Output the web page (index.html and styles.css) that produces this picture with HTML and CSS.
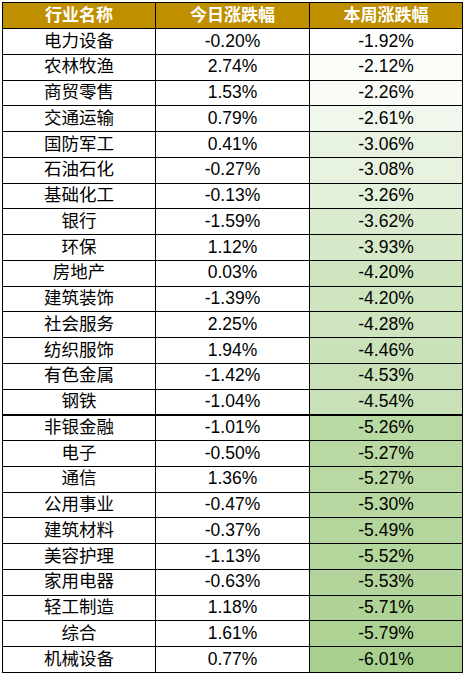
FILE: index.html
```html
<!DOCTYPE html>
<html lang="zh">
<head>
<meta charset="utf-8">
<title>行业涨跌幅</title>
<link rel="stylesheet" href="styles.css">
</head>
<body>
<div class="sheet">
  <div class="cell head">行业名称</div><div class="cell head">今日涨跌幅</div><div class="cell head">本周涨跌幅</div>
  <div class="cell">电力设备</div><div class="cell">-0.20%</div><div class="cell" style="background:rgb(255,255,255)">-1.92%</div>
  <div class="cell">农林牧渔</div><div class="cell">2.74%</div><div class="cell" style="background:rgb(251,253,249)">-2.12%</div>
  <div class="cell">商贸零售</div><div class="cell">1.53%</div><div class="cell" style="background:rgb(248,251,246)">-2.26%</div>
  <div class="cell">交通运输</div><div class="cell">0.79%</div><div class="cell" style="background:rgb(240,247,236)">-2.61%</div>
  <div class="cell">国防军工</div><div class="cell">0.41%</div><div class="cell" style="background:rgb(231,242,224)">-3.06%</div>
  <div class="cell">石油石化</div><div class="cell">-0.27%</div><div class="cell" style="background:rgb(231,242,223)">-3.08%</div>
  <div class="cell">基础化工</div><div class="cell">-0.13%</div><div class="cell" style="background:rgb(227,240,218)">-3.26%</div>
  <div class="cell">银行</div><div class="cell">-1.59%</div><div class="cell" style="background:rgb(219,235,208)">-3.62%</div>
  <div class="cell">环保</div><div class="cell">1.12%</div><div class="cell" style="background:rgb(213,232,199)">-3.93%</div>
  <div class="cell">房地产</div><div class="cell">0.03%</div><div class="cell" style="background:rgb(207,229,192)">-4.20%</div>
  <div class="cell">建筑装饰</div><div class="cell">-1.39%</div><div class="cell" style="background:rgb(207,229,192)">-4.20%</div>
  <div class="cell">社会服务</div><div class="cell">2.25%</div><div class="cell" style="background:rgb(205,228,190)">-4.28%</div>
  <div class="cell">纺织服饰</div><div class="cell">1.94%</div><div class="cell" style="background:rgb(202,226,185)">-4.46%</div>
  <div class="cell">有色金属</div><div class="cell">-1.42%</div><div class="cell" style="background:rgb(200,225,183)">-4.53%</div>
  <div class="cell">钢铁</div><div class="cell">-1.04%</div><div class="cell" style="background:rgb(200,225,183)">-4.54%</div>
  <div class="cell split">非银金融</div><div class="cell split">-1.01%</div><div class="cell split" style="background:rgb(185,217,163)">-5.26%</div>
  <div class="cell">电子</div><div class="cell">-0.50%</div><div class="cell" style="background:rgb(185,216,162)">-5.27%</div>
  <div class="cell">通信</div><div class="cell">1.36%</div><div class="cell" style="background:rgb(185,216,162)">-5.27%</div>
  <div class="cell">公用事业</div><div class="cell">-0.47%</div><div class="cell" style="background:rgb(184,216,162)">-5.30%</div>
  <div class="cell">建筑材料</div><div class="cell">-0.37%</div><div class="cell" style="background:rgb(180,214,156)">-5.49%</div>
  <div class="cell">美容护理</div><div class="cell">-1.13%</div><div class="cell" style="background:rgb(179,214,156)">-5.52%</div>
  <div class="cell">家用电器</div><div class="cell">-0.63%</div><div class="cell" style="background:rgb(179,213,155)">-5.53%</div>
  <div class="cell">轻工制造</div><div class="cell">1.18%</div><div class="cell" style="background:rgb(175,211,150)">-5.71%</div>
  <div class="cell">综合</div><div class="cell">1.61%</div><div class="cell" style="background:rgb(174,210,148)">-5.79%</div>
  <div class="cell">机械设备</div><div class="cell">0.77%</div><div class="cell" style="background:rgb(169,208,142)">-6.01%</div>
</div>
</body>
</html>
```
FILE: styles.css
```css
html, body {
  margin: 0;
  background: #ffffff;
}
body {
  padding: 2px;
  font-family: "Liberation Sans", "Noto Sans CJK SC", sans-serif;
  font-size: 17.5px;
  color: #000000;
}
.sheet {
  display: grid;
  grid-template-columns: 152px 153px 152px;
  grid-template-rows: 25px repeat(25, 24.76px);
  gap: 1px;
  padding: 1px;
  background: #000000;
  width: max-content;
}
.cell {
  background: #ffffff;
  display: flex;
  align-items: center;
  justify-content: center;
  line-height: 1;
  white-space: nowrap;
}
.head {
  background: #bf8f00;
  color: #ffffff;
  font-weight: bold;
  font-size: 17px;
}
.split {
  border-top: 1px solid #000000;
  box-sizing: border-box;
}
```
